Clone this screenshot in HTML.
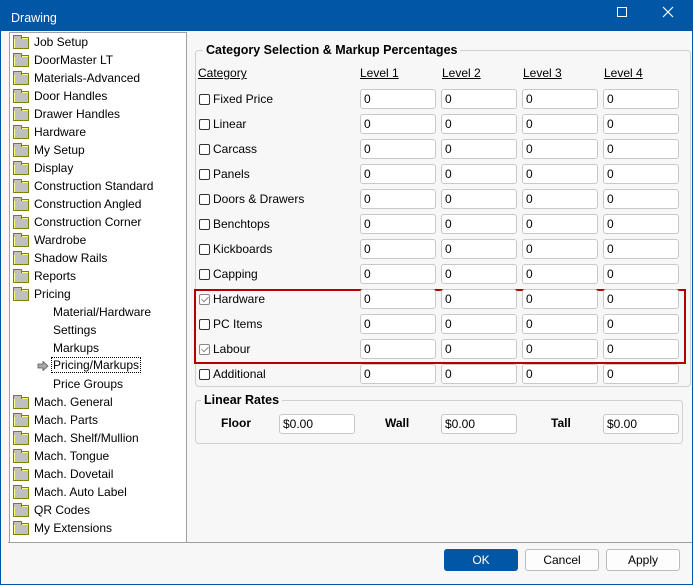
<!DOCTYPE html>
<html><head><style>
*{box-sizing:border-box;margin:0;padding:0}
body{width:693px;height:585px;overflow:hidden;background:#f7f7f7;font-family:"Liberation Sans",sans-serif;font-size:12px;color:#000;position:relative}
.a{position:absolute}
#title{left:0;top:0;width:693px;height:31px;background:#0156a5;color:#fff;font-size:12.5px}
#frame{left:0;top:0;width:693px;height:585px;border:1px solid #0156a5;pointer-events:none}
#tree{left:9px;top:32px;width:178px;height:511px;background:#fff;border:1px solid #a0a0a0}
.ti{position:absolute;left:24px;font-size:12px;white-space:nowrap}
.fd{position:absolute;left:3px;width:16px;height:12px;border:1px solid #808000;background:#c0c0c0;box-shadow:inset 1px 1px 0 #ffff80}
.fd:before{content:"";position:absolute;left:-1px;top:-3px;width:7px;height:3px;border:1px solid #808000;border-bottom:none;background:#c0c0c0}
.gb{border:1px solid #d0d0d0;border-radius:4px}
.gt{font-weight:bold;font-size:12.5px;background:#f7f7f7;padding:0 3px}
.inp{position:absolute;height:20px;width:76px;background:#fff;border:1px solid #c8c8c8;border-radius:3px;padding:2px 3px;font-size:12px}
.cb{position:absolute;left:199px;width:11px;height:11px;border:1px solid #333;border-radius:2px;background:#fff}
.cb.k{border-color:#888;}
.cb.k:after{content:"";position:absolute;left:3px;top:0px;width:3px;height:6px;border:solid #888;border-width:0 1px 1px 0;transform:rotate(45deg)}
.cl{position:absolute;left:213px;font-size:12px}
.hd{position:absolute;top:66px;text-decoration:underline;font-size:12px}
.btn{position:absolute;top:549px;width:74px;height:22px;border:1px solid #bbb;border-radius:3px;background:#fdfdfd;text-align:center;line-height:20px;font-size:12px}
</style></head><body>
<div id="title" class="a"><span class="a" style="left:11px;top:11px">Drawing</span>
<div class="a" style="left:617px;top:7px;width:10px;height:10px;border:1px solid #fff"></div>
<svg class="a" style="left:662px;top:6px" width="12" height="12"><path d="M1 1L11 11M11 1L1 11" stroke="#fff" stroke-width="1.2"/></svg>
</div>
<div id="tree" class="a">
<div class="fd" style="top:4px"></div><div class="ti" style="top:2px">Job Setup</div>
<div class="fd" style="top:22px"></div><div class="ti" style="top:20px">DoorMaster LT</div>
<div class="fd" style="top:40px"></div><div class="ti" style="top:38px">Materials-Advanced</div>
<div class="fd" style="top:58px"></div><div class="ti" style="top:56px">Door Handles</div>
<div class="fd" style="top:76px"></div><div class="ti" style="top:74px">Drawer Handles</div>
<div class="fd" style="top:94px"></div><div class="ti" style="top:92px">Hardware</div>
<div class="fd" style="top:112px"></div><div class="ti" style="top:110px">My Setup</div>
<div class="fd" style="top:130px"></div><div class="ti" style="top:128px">Display</div>
<div class="fd" style="top:148px"></div><div class="ti" style="top:146px">Construction Standard</div>
<div class="fd" style="top:166px"></div><div class="ti" style="top:164px">Construction Angled</div>
<div class="fd" style="top:184px"></div><div class="ti" style="top:182px">Construction Corner</div>
<div class="fd" style="top:202px"></div><div class="ti" style="top:200px">Wardrobe</div>
<div class="fd" style="top:220px"></div><div class="ti" style="top:218px">Shadow Rails</div>
<div class="fd" style="top:238px"></div><div class="ti" style="top:236px">Reports</div>
<div class="fd" style="top:256px"></div><div class="ti" style="top:254px">Pricing</div>
<div class="ti" style="top:272px;left:43px">Material/Hardware</div>
<div class="ti" style="top:290px;left:43px">Settings</div>
<div class="ti" style="top:308px;left:43px">Markups</div>
<svg class="a" style="left:27px;top:328px" width="12" height="10"><path d="M1 3H6V0.5L11 5L6 9.5V7H1Z" fill="#aaa" stroke="#555" stroke-width="0.8"/></svg>
<div class="ti" style="top:324px;left:41px;border:1px dotted #000;padding:0 1px">Pricing/Markups</div>
<div class="ti" style="top:344px;left:43px">Price Groups</div>
<div class="fd" style="top:364px"></div><div class="ti" style="top:362px">Mach. General</div>
<div class="fd" style="top:382px"></div><div class="ti" style="top:380px">Mach. Parts</div>
<div class="fd" style="top:400px"></div><div class="ti" style="top:398px">Mach. Shelf/Mullion</div>
<div class="fd" style="top:418px"></div><div class="ti" style="top:416px">Mach. Tongue</div>
<div class="fd" style="top:436px"></div><div class="ti" style="top:434px">Mach. Dovetail</div>
<div class="fd" style="top:454px"></div><div class="ti" style="top:452px">Mach. Auto Label</div>
<div class="fd" style="top:472px"></div><div class="ti" style="top:470px">QR Codes</div>
<div class="fd" style="top:490px"></div><div class="ti" style="top:488px">My Extensions</div>
</div>

<div class="a gb" style="left:195px;top:50px;width:496px;height:337px"></div>
<div class="a gt" style="left:203px;top:43px">Category Selection &amp; Markup Percentages</div>
<div class="hd" style="left:198px">Category</div>
<div class="hd" style="left:360px">Level 1</div>
<div class="hd" style="left:442px">Level 2</div>
<div class="hd" style="left:523px">Level 3</div>
<div class="hd" style="left:604px">Level 4</div>

<div class="a" style="left:194px;top:289px;width:492px;height:75px;border:2px solid #b00000"></div>

<div id="rows"></div>
<!-- rows -->
<div class="cb" style="top:94px"></div><div class="cl" style="top:92px">Fixed Price</div>
<div class="cb" style="top:119px"></div><div class="cl" style="top:117px">Linear</div>
<div class="cb" style="top:144px"></div><div class="cl" style="top:142px">Carcass</div>
<div class="cb" style="top:169px"></div><div class="cl" style="top:167px">Panels</div>
<div class="cb" style="top:194px"></div><div class="cl" style="top:192px">Doors &amp; Drawers</div>
<div class="cb" style="top:219px"></div><div class="cl" style="top:217px">Benchtops</div>
<div class="cb" style="top:244px"></div><div class="cl" style="top:242px">Kickboards</div>
<div class="cb" style="top:269px"></div><div class="cl" style="top:267px">Capping</div>
<div class="cb k" style="top:294px"></div><div class="cl" style="top:292px">Hardware</div>
<div class="cb" style="top:319px"></div><div class="cl" style="top:317px">PC Items</div>
<div class="cb k" style="top:344px"></div><div class="cl" style="top:342px">Labour</div>
<div class="cb" style="top:369px"></div><div class="cl" style="top:367px">Additional</div>

<div class="inp" style="left:360px;top:89px">0</div><div class="inp" style="left:441px;top:89px">0</div><div class="inp" style="left:522px;top:89px">0</div><div class="inp" style="left:603px;top:89px">0</div>
<div class="inp" style="left:360px;top:114px">0</div><div class="inp" style="left:441px;top:114px">0</div><div class="inp" style="left:522px;top:114px">0</div><div class="inp" style="left:603px;top:114px">0</div>
<div class="inp" style="left:360px;top:139px">0</div><div class="inp" style="left:441px;top:139px">0</div><div class="inp" style="left:522px;top:139px">0</div><div class="inp" style="left:603px;top:139px">0</div>
<div class="inp" style="left:360px;top:164px">0</div><div class="inp" style="left:441px;top:164px">0</div><div class="inp" style="left:522px;top:164px">0</div><div class="inp" style="left:603px;top:164px">0</div>
<div class="inp" style="left:360px;top:189px">0</div><div class="inp" style="left:441px;top:189px">0</div><div class="inp" style="left:522px;top:189px">0</div><div class="inp" style="left:603px;top:189px">0</div>
<div class="inp" style="left:360px;top:214px">0</div><div class="inp" style="left:441px;top:214px">0</div><div class="inp" style="left:522px;top:214px">0</div><div class="inp" style="left:603px;top:214px">0</div>
<div class="inp" style="left:360px;top:239px">0</div><div class="inp" style="left:441px;top:239px">0</div><div class="inp" style="left:522px;top:239px">0</div><div class="inp" style="left:603px;top:239px">0</div>
<div class="inp" style="left:360px;top:264px">0</div><div class="inp" style="left:441px;top:264px">0</div><div class="inp" style="left:522px;top:264px">0</div><div class="inp" style="left:603px;top:264px">0</div>
<div class="inp" style="left:360px;top:289px">0</div><div class="inp" style="left:441px;top:289px">0</div><div class="inp" style="left:522px;top:289px">0</div><div class="inp" style="left:603px;top:289px">0</div>
<div class="inp" style="left:360px;top:314px">0</div><div class="inp" style="left:441px;top:314px">0</div><div class="inp" style="left:522px;top:314px">0</div><div class="inp" style="left:603px;top:314px">0</div>
<div class="inp" style="left:360px;top:339px">0</div><div class="inp" style="left:441px;top:339px">0</div><div class="inp" style="left:522px;top:339px">0</div><div class="inp" style="left:603px;top:339px">0</div>
<div class="inp" style="left:360px;top:364px">0</div><div class="inp" style="left:441px;top:364px">0</div><div class="inp" style="left:522px;top:364px">0</div><div class="inp" style="left:603px;top:364px">0</div>

<div class="a gb" style="left:195px;top:400px;width:488px;height:44px"></div>
<div class="a gt" style="left:201px;top:393px">Linear Rates</div>
<div class="a" style="left:221px;top:416px;font-weight:bold">Floor</div>
<div class="a" style="left:385px;top:416px;font-weight:bold">Wall</div>
<div class="a" style="left:551px;top:416px;font-weight:bold">Tall</div>
<div class="inp" style="left:279px;top:414px">$0.00</div>
<div class="inp" style="left:441px;top:414px">$0.00</div>
<div class="inp" style="left:603px;top:414px">$0.00</div>

<div class="a" style="left:8px;top:542px;width:684px;height:1px;background:#a0a0a0"></div>
<div class="btn" style="left:444px;background:#0156a5;border-color:#0156a5;color:#fff">OK</div>
<div class="btn" style="left:525px">Cancel</div>
<div class="btn" style="left:606px">Apply</div>
<div id="frame" class="a"></div>
</body></html>
